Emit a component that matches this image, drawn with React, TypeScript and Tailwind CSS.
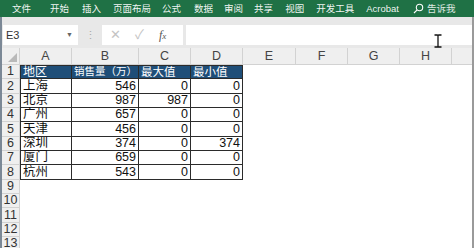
import React from 'react';

const tabs: [string, string][] = [
  ['文件', 'ml-[12px]'],
  ['开始', 'ml-[19px]'],
  ['插入', 'ml-[13px]'],
  ['页面布局', 'ml-[12px]'],
  ['公式', 'ml-[11px]'],
  ['数据', 'ml-[13px]'],
  ['审阅', 'ml-[11px]'],
  ['共享', 'ml-[11px]'],
  ['视图', 'ml-[12px]'],
  ['开发工具', 'ml-[12px]'],
  ['Acrobat', 'ml-[12px]'],
];

const cols = [
  { label: 'A', w: 'w-[52px]' },
  { label: 'B', w: 'w-[67px]' },
  { label: 'C', w: 'w-[52px]' },
  { label: 'D', w: 'w-[52px]' },
  { label: 'E', w: 'w-[53px]' },
  { label: 'F', w: 'w-[52px]' },
  { label: 'G', w: 'w-[52px]' },
  { label: 'H', w: 'w-[52px]' },
];

const data: [string, number, number, number][] = [
  ['上海', 546, 0, 0],
  ['北京', 987, 987, 0],
  ['广州', 657, 0, 0],
  ['天津', 456, 0, 0],
  ['深圳', 374, 0, 374],
  ['厦门', 659, 0, 0],
  ['杭州', 543, 0, 0],
];

const font = { fontFamily: '"Liberation Sans", "Noto Sans CJK SC", sans-serif' };

const Ribbon = () => (
  <div className="h-[17px] bg-[#1f7145] flex items-center text-[9.5px] text-white/95 leading-none">
    {tabs.map(([t, ml]) => (
      <span key={t} className={ml}>
        {t}
      </span>
    ))}
    <svg className="ml-[14px]" width="11" height="11" viewBox="0 0 11 11">
      <circle cx="6.5" cy="4.5" r="3.2" fill="none" stroke="white" strokeWidth="1.1" />
      <line x1="4.2" y1="6.8" x2="1" y2="10" stroke="white" strokeWidth="1.2" />
    </svg>
    <span className="ml-[3px] text-white/85">告诉我</span>
  </div>
);

const FormulaBar = () => (
  <div className="h-[31px] bg-[#e8e8e8] pt-[8px] pb-[3px] flex">
    <div className="ml-[1px] w-[75px] h-[20px] bg-white flex items-center justify-between px-[3px] text-[11px] text-[#333]">
      <span>E3</span>
      <span className="text-[7px] text-[#666] mr-[2px]">▼</span>
    </div>
    <div className="w-[24px] flex items-center justify-center text-[11px] text-[#aaa]">⋮</div>
    <div className="w-[81px] h-[20px] bg-white flex items-center text-[13px] text-[#c4c4c4]">
      <span className="ml-[8px]">✕</span>
      <span className="ml-[14px]">✓</span>
      <span className="ml-[15px] text-[12px] italic text-[#555]" style={{ fontFamily: '"Liberation Serif", serif' }}>
        f<span className="text-[9px]">x</span>
      </span>
    </div>
    <div className="ml-[3px] flex-1 h-[20px] bg-white" />
  </div>
);

const ColHeader = () => (
  <div className="h-[17px] flex bg-[#efefef] border-b border-[#d2d2d2] text-[12.5px] text-[#444]">
    <div className="w-[18px] relative border-r border-[#d2d2d2]">
      <div className="absolute right-[2px] bottom-[2px] w-0 h-0 border-l-[9px] border-l-transparent border-b-[9px] border-b-[#b9b9b9]" />
    </div>
    {cols.map((c) => (
      <div key={c.label} className={`${c.w} border-r border-[#d2d2d2] flex items-center justify-center pt-[1px]`}>
        {c.label}
      </div>
    ))}
    <div className="flex-1" />
  </div>
);

const cell = 'h-full border-r border-b border-[#2b2b2b] flex items-center px-[2px]';

const Row = ({ n, children }: { n: number; children?: React.ReactNode }) => (
  <div className="h-[14.33px] flex">
    <div className="w-[18px] shrink-0 bg-[#efefef] border-r border-b border-[#d2d2d2] flex items-center justify-center text-[12.5px] text-[#333]">
      {n}
    </div>
    {children}
    <div className="flex-1" />
  </div>
);

export default function App() {
  return (
    <div className="w-[474px] h-[248px] overflow-hidden bg-white" style={font}>
      <Ribbon />
      <div className="border-l-2 border-[#7b8896] border-r-2 border-r-[#9a9a9a] relative">
        <FormulaBar />
        <svg className="absolute left-[431px] top-[17px]" width="10" height="14" viewBox="0 0 10 14">
          <path d="M1.5 1H4.3Q5 1 5 2V12Q5 13 4.3 13H1.5M8.5 1H5.7Q5 1 5 2M5 12Q5 13 5.7 13H8.5" fill="none" stroke="#111" strokeWidth="1.3" />
        </svg>
        <ColHeader />
        <Row n={1}>
          <div className={`${cell} w-[52px] border-l border-t bg-[#1f4e78] text-white text-[12px]`}>地区</div>
          <div className={`${cell} w-[67px] border-t bg-[#1f4e78] text-white text-[10.5px] px-[1px]`}>销售量（万）</div>
          <div className={`${cell} w-[52px] border-t bg-[#1f4e78] text-white text-[11.5px]`}>最大值</div>
          <div className={`${cell} w-[52px] border-t bg-[#1f4e78] text-white text-[11.5px]`}>最小值</div>
        </Row>
        {data.map(([city, v, mx, mn], i) => (
          <Row key={city} n={i + 2}>
            <div className={`${cell} w-[52px] border-l text-[12.5px] text-[#111]`}>{city}</div>
            <div className={`${cell} w-[67px] justify-end text-[12.5px] text-[#111]`}>{v}</div>
            <div className={`${cell} w-[52px] justify-end text-[12.5px] text-[#111]`}>{mx}</div>
            <div className={`${cell} w-[52px] justify-end text-[12.5px] text-[#111]`}>{mn}</div>
          </Row>
        ))}
        {[9, 10, 11, 12, 13].map((n) => (
          <Row key={n} n={n} />
        ))}
      </div>
    </div>
  );
}
